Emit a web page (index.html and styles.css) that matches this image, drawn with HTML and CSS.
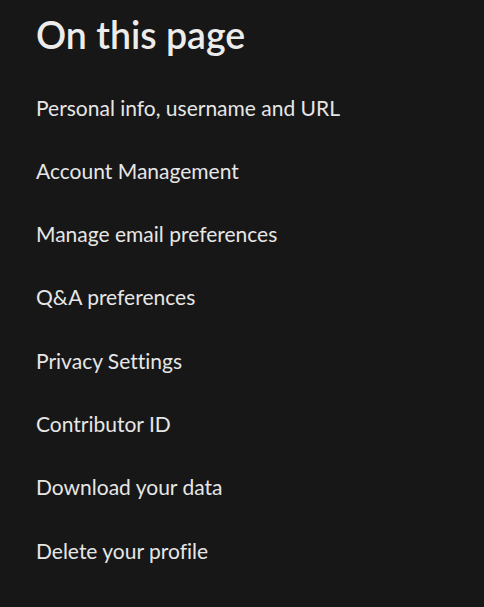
FILE: index.html
```html
<!DOCTYPE html>
<html lang="en">
<head>
<meta charset="utf-8">
<title>On this page</title>
<link rel="stylesheet" href="styles.css">
</head>
<body>
<nav class="toc">
  <h2 class="toc-title">On this page</h2>
  <ul class="toc-list">
    <li><a href="#personal">Personal info, username and URL</a></li>
    <li><a href="#account">Account Management</a></li>
    <li><a href="#email">Manage email preferences</a></li>
    <li><a href="#qa">Q&amp;A preferences</a></li>
    <li><a href="#privacy">Privacy Settings</a></li>
    <li><a href="#contributor">Contributor ID</a></li>
    <li><a href="#download">Download your data</a></li>
    <li><a href="#delete">Delete your profile</a></li>
  </ul>
</nav>
</body>
</html>
```
FILE: styles.css
```css
html, body {
  margin: 0;
  padding: 0;
  background: #171717;
  height: 100%;
}
body {
  font-family: Lato, "Open Sans", sans-serif;
  font-variant-ligatures: none;
  color: #e6e6e6;
}
.toc {
  padding: 11px 0 0 36px;
}
.toc-title {
  margin: 0;
  font-size: 37.5px;
  font-weight: 600;
  line-height: 48px;
  color: #ececec;
}
.toc-list {
  list-style: none;
  margin: 33.5px 0 0;
  padding: 0;
  display: flex;
  flex-direction: column;
  gap: 33.33px;
}
.toc-list li {
  font-size: 21px;
  line-height: 30px;
}
.toc-list a {
  color: #e6e6e6;
  text-decoration: none;
}
```
